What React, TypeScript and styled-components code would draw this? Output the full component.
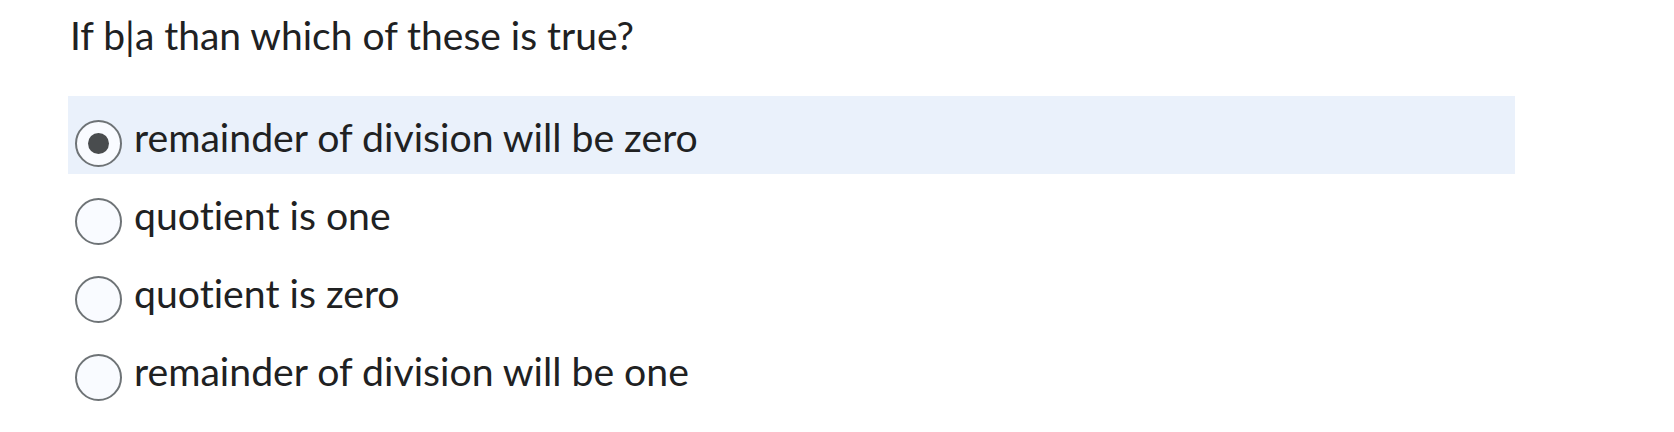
import React, { useState } from "react";
import styled, { createGlobalStyle } from "styled-components";

const Global = createGlobalStyle`
  html, body { margin: 0; padding: 0; background: #ffffff; }
  body { font-family: Lato, "Noto Sans", sans-serif; color: #202122; font-variant-ligatures: none; }
`;

const Page = styled.div`
  padding: 12px 0 0 68px;
  width: 1447px;
`;

const Question = styled.h1`
  margin: 0 0 38px 2px;
  font-family: Lato, "Noto Sans", sans-serif;
  font-weight: 400;
  font-size: 39px;
  line-height: 46px;
  color: #202122;
  font-variant-ligatures: none;
`;

const Options = styled.div`
  display: flex;
  flex-direction: column;
`;

const Row = styled.label<{ $selected: boolean }>`
  display: flex;
  align-items: center;
  gap: 12px;
  height: 78px;
  padding-left: 7px;
  background: ${(p) => (p.$selected ? "#eaf1fb" : "transparent")};
  cursor: pointer;
`;

const Radio = styled.input.attrs({ type: "radio" })`
  appearance: none;
  -webkit-appearance: none;
  margin: 16px 0 0 0;
  width: 47px;
  height: 47px;
  box-sizing: border-box;
  border: 2px solid #6e7376;
  border-radius: 50%;
  background: #f9fbff;
  display: grid;
  place-items: center;
  flex: none;
  &:checked::after {
    content: "";
    width: 21px;
    height: 21px;
    border-radius: 50%;
    background: #494c4e;
  }
`;

const Label = styled.span`
  font-family: Lato, "Noto Sans", sans-serif;
  font-size: 39.2px;
  line-height: 78px;
  padding-top: 3px;
  color: #202122;
  font-variant-ligatures: none;
`;

const answers = [
  "remainder of division will be zero",
  "quotient is one",
  "quotient is zero",
  "remainder of division will be one",
];

export default function App() {
  const [sel, setSel] = useState(0);
  return (
    <>
      <Global />
      <Page>
        <Question>If b|a than which of these is true?</Question>
        <Options>
          {answers.map((a, i) => (
            <Row key={a} $selected={sel === i}>
              <Radio name="q" checked={sel === i} onChange={() => setSel(i)} />
              <Label>{a}</Label>
            </Row>
          ))}
        </Options>
      </Page>
    </>
  );
}
